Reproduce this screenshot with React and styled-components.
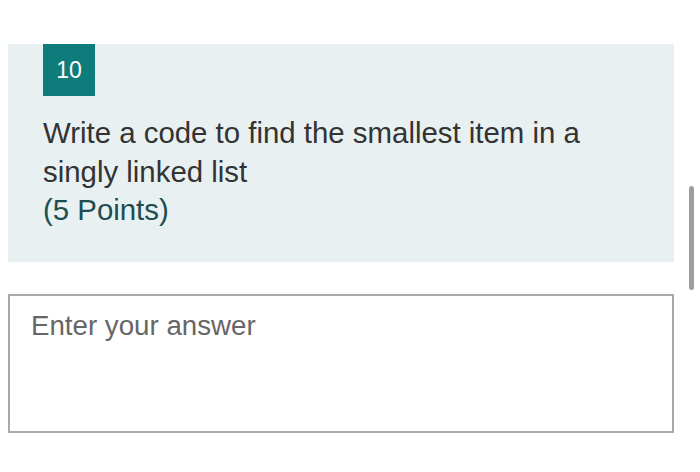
import styled, { createGlobalStyle } from "styled-components";

const Global = createGlobalStyle`
  html, body {
    margin: 0;
    padding: 0;
    background: #fff;
    font-family: "Liberation Sans", Arial, sans-serif;
  }
`;

const Page = styled.div`
  position: relative;
  width: 700px;
  height: 472px;
  overflow: hidden;
  padding: 44px 26px 0 8px;
  box-sizing: border-box;
`;

const QuestionCard = styled.div`
  background: #e8f0f1;
  padding: 0 20px 33px 35px;
  display: flex;
  flex-direction: column;
  align-items: flex-start;
`;

const Badge = styled.div`
  width: 52px;
  height: 52px;
  background: #0e7c7b;
  color: #fff;
  font-size: 23px;
  display: flex;
  align-items: center;
  justify-content: center;
`;

const Title = styled.div`
  margin-top: 17px;
  color: #333;
  font-size: 29.4px;
  line-height: 39px;
`;

const Points = styled.div`
  color: #1c4e4f;
  font-size: 29.4px;
  line-height: 38px;
`;

const Answer = styled.textarea`
  display: block;
  margin-top: 32px;
  width: 100%;
  height: 139px;
  box-sizing: border-box;
  border: 2px solid #a9a9a9;
  border-radius: 0;
  padding: 12px 21px;
  font-family: "Liberation Sans", Arial, sans-serif;
  font-size: 27.7px;
  line-height: 36px;
  color: #333;
  resize: none;
  outline: none;
  &::placeholder {
    color: #666;
  }
`;

const ScrollThumb = styled.div`
  position: absolute;
  right: 6px;
  top: 186px;
  width: 5px;
  height: 104px;
  border-radius: 3px;
  background: #9e9e9e;
`;

export default function App() {
  return (
    <>
      <Global />
      <Page>
        <QuestionCard>
          <Badge>10</Badge>
          <Title>
            Write a code to find the smallest item in a
            <br />
            singly linked list
          </Title>
          <Points>(5 Points)</Points>
        </QuestionCard>
        <Answer placeholder="Enter your answer" />
        <ScrollThumb />
      </Page>
    </>
  );
}
